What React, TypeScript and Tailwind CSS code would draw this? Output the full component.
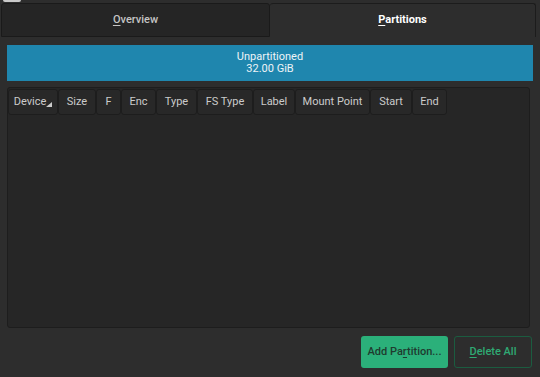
import React from 'react';

const columns = [
  { label: 'Device', w: 'w-[50px]', sort: true },
  { label: 'Size', w: 'w-[38px]' },
  { label: 'F', w: 'w-[25px]' },
  { label: 'Enc', w: 'w-[35px]' },
  { label: 'Type', w: 'w-[41px]' },
  { label: 'FS Type', w: 'w-[56px]' },
  { label: 'Label', w: 'w-[42px]' },
  { label: 'Mount Point', w: 'w-[75px]' },
  { label: 'Start', w: 'w-[42px]' },
  { label: 'End', w: 'w-[35px]' },
];

function HeaderCell({ label, w, sort }: { label: string; w: string; sort?: boolean }) {
  return (
    <div
      className={`${w} flex h-[26px] shrink-0 items-center justify-center rounded-[3px] border border-[#1d1d1d] bg-[#282828] text-[11px] text-[#cbcbcb]`}
    >
      <span>{label}</span>
      {sort && (
        <svg width="6" height="5" viewBox="0 0 6 5" className="mt-[4px]">
          <polygon points="6,0 6,5 0,5" fill="#cbcbcb" />
        </svg>
      )}
    </div>
  );
}

export default function App() {
  return (
    <div
      className="flex h-[377px] w-[540px] flex-col overflow-hidden bg-[#2d2d2d] text-[11px]"
      style={{ fontFamily: 'Roboto, "Liberation Sans", sans-serif' }}
    >
      <div className="relative h-[3px] shrink-0">
        <div className="absolute left-[3px] top-0 h-[2px] w-[18px] rounded-b-[2px] bg-[#c9c9c9]" />
      </div>

      <div className="flex h-[34px] shrink-0 pl-[1px] pr-[4px]">
        <div className="flex w-[269px] items-center justify-center rounded-t-[3px] border border-[#1a1a1a] bg-[#252525] font-medium text-[#c4c4c4]">
          <span>
            <span className="underline underline-offset-2">O</span>verview
          </span>
        </div>
        <div className="flex flex-1 items-center justify-center rounded-t-[3px] border-r border-t border-[#1c1c1c] bg-[#2d2d2d] font-bold text-white">
          <span>
            <span className="underline underline-offset-2">P</span>artitions
          </span>
        </div>
      </div>

      <div className="flex flex-1 flex-col pl-[7px] pr-[7px] pt-[8px]">
        <div className="flex h-[36px] w-[526px] flex-col items-center justify-center bg-[#1f86ae] leading-[12px] text-[#eef4f7]">
          <span>Unpartitioned</span>
          <span>32.00 GiB</span>
        </div>

        <div className="mt-[6px] h-[241px] w-[523px] rounded-[3px] border border-[#1d1d1d] bg-[#262626] pt-[1px]">
          <div className="flex">
            {columns.map((c) => (
              <HeaderCell key={c.label} {...c} />
            ))}
          </div>
        </div>

        <div className="mt-[8px] flex justify-end gap-[6px] pr-[1px]">
          <button className="flex h-[32px] w-[87px] items-center justify-center rounded-[3px] bg-[#2bb07a] font-medium text-[#1f3b2f]">
            <span>
              Add Pa<span className="underline underline-offset-2">r</span>tition...
            </span>
          </button>
          <button className="flex h-[32px] w-[78px] items-center justify-center rounded-[3px] border border-[#1b5c40] bg-transparent font-medium text-[#2faa74]">
            <span>
              <span className="underline underline-offset-2">D</span>elete All
            </span>
          </button>
        </div>
      </div>
    </div>
  );
}
